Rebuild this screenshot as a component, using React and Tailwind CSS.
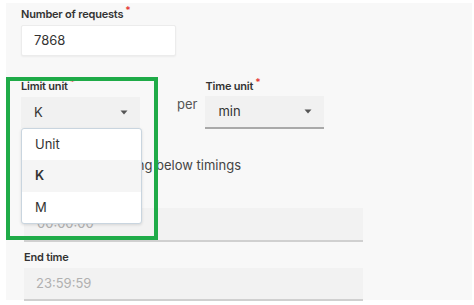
import React from "react";

const font = { fontFamily: "Inter, 'Noto Sans', sans-serif" };

function Label({ children, req, className = "" }) {
  return (
    <div className={"text-[11px] leading-[14px] font-semibold text-[#333] tracking-[-0.2px] " + className}>
      {children}
      {req && <span className="text-[#e53935] text-[10px] relative -top-[4px] ml-[2px]">*</span>}
    </div>
  );
}

function Caret() {
  return (
    <svg width="8" height="5" viewBox="0 0 8 5" className="shrink-0">
      <path d="M0.5 0.5 L7.5 0.5 L4 4.5 Z" fill="#555" />
    </svg>
  );
}

export default function App() {
  return (
    <div className="w-[474px] h-[305px] bg-white pt-[3px] pl-[6px] pr-[2px] pb-[5px] overflow-hidden" style={font}>
      <div className="relative h-full bg-[#f8f8f8]">
        <div className="pl-[15px] pt-[4px]">
          <Label req>Number of requests</Label>
          <div className="mt-[4px] w-[155px] h-[31px] bg-white rounded-[2px] border border-[#ececec] shadow-[0_1px_2px_rgba(0,0,0,0.05)] flex items-center pl-[12px] text-[13px] text-[#333]">
            7868
          </div>

          <div className="mt-[23px] flex">
            <div className="w-[119px]">
              <Label req>Limit unit</Label>
              <div className="mt-[4px] h-[31px] bg-[#f1f1f1] flex items-center justify-between pl-[13px] pr-[12px] text-[13px] text-[#333]">
                <span>K</span>
                <Caret />
              </div>
            </div>
            <div className="ml-[37px] mt-[16px] text-[13px] leading-[18px] text-[#555]">per</div>
            <div className="ml-[8px] w-[119px]">
              <Label req>Time unit</Label>
              <div className="mt-[3px] h-[33px] bg-[#f1f1f1] border-b-2 border-[#a9a9a9] flex items-center justify-between pl-[13px] pr-[12px] text-[13px] text-[#333]">
                <span>min</span>
                <Caret />
              </div>
            </div>
          </div>

          <div className="mt-[27px] flex items-center text-[13px] leading-[18px] text-[#444]">
            <div className="w-[13px] h-[13px] border border-[#888] rounded-[2px] ml-[3px] mr-[8px]" />
            <span>Apply limit during below timings</span>
          </div>
        </div>

        <div className="pl-[18px] mt-[17px] w-[357px]">
          <Label>Start time</Label>
          <div className="mt-[3px] h-[34px] bg-[#f2f2f2] border-b-2 border-[#d0d0d0] flex items-center pl-[13px] text-[13px] text-[#b0b0b0]">
            00:00:00
          </div>
          <Label className="mt-[8px]">End time</Label>
          <div className="mt-[4px] h-[33px] bg-[#f2f2f2] border-b-2 border-[#d0d0d0] flex items-center pl-[12px] text-[13px] text-[#b0b0b0]">
            23:59:59
          </div>
        </div>

        <div className="absolute left-[15px] top-[125px] w-[121px] bg-white border border-[#c9d5df] rounded-[3px] shadow-[0_1px_3px_rgba(0,0,0,0.12)] text-[13px] text-[#333]">
          <div className="h-[31px] flex items-center pl-[13px]">Unit</div>
          <div className="h-[32px] flex items-center pl-[13px] bg-[#f5f5f5] font-semibold">K</div>
          <div className="h-[31px] flex items-center pl-[13px]">M</div>
        </div>

        <div className="absolute left-0 top-[74px] w-[152px] h-[163px] border-[4px] border-[#1fab48]" />
      </div>
    </div>
  );
}
